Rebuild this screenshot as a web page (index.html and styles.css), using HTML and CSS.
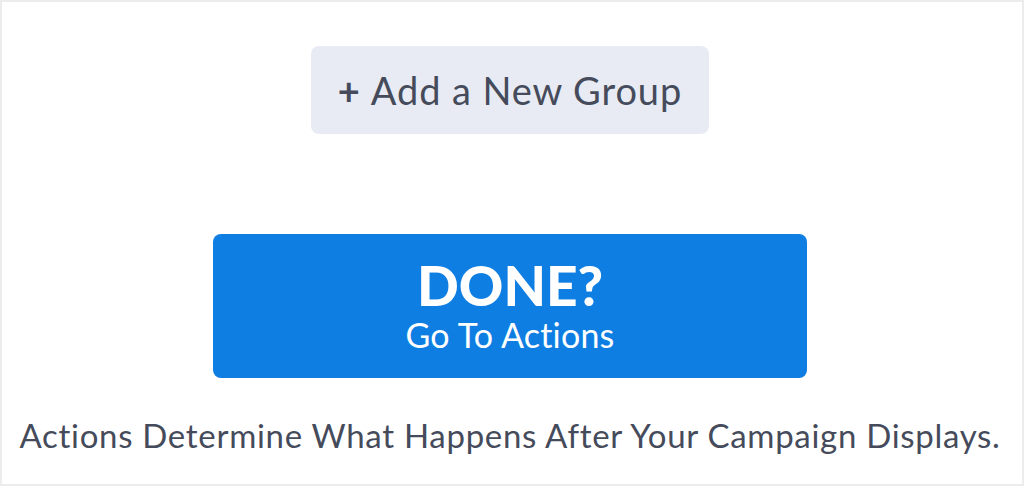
FILE: index.html
```html
<!DOCTYPE html>
<html lang="en">
<head>
<meta charset="utf-8">
<title>Groups</title>
<link rel="stylesheet" href="styles.css">
</head>
<body>
<div class="frame">
  <button class="add-group" type="button"><span class="plus">+</span> Add a New Group</button>
  <button class="done" type="button">
    <span class="done-title">DONE?</span>
    <span class="done-sub">Go To Actions</span>
  </button>
  <p class="note">Actions Determine What Happens After Your Campaign Displays.</p>
</div>
</body>
</html>
```
FILE: styles.css
```css
* { box-sizing: border-box; }
html, body { margin: 0; padding: 0; background: #ffffff; }
.frame {
  width: 1024px;
  height: 486px;
  border: 2px solid #ececec;
  display: flex;
  flex-direction: column;
  align-items: center;
  padding: 44px 4px 0 0;
  font-family: Lato, "Open Sans", sans-serif;
  color: #454b5b;
}
.add-group {
  width: 398px;
  height: 88px;
  border: none;
  border-radius: 8px;
  background: #e8ebf3;
  color: #454b5b;
  font-family: inherit;
  font-size: 38px;
  font-weight: 400;
  letter-spacing: 0.9px;
  padding: 0;
  display: flex;
  align-items: center;
  justify-content: center;
}
.plus { font-weight: 700; margin-right: 10px; }
.done {
  margin-top: 100px;
  width: 594px;
  height: 144px;
  border: none;
  border-radius: 8px;
  background: #0e7ee3;
  color: #ffffff;
  font-family: inherit;
  display: flex;
  flex-direction: column;
  align-items: center;
  justify-content: center;
  padding: 0;
}
.done-title {
  font-size: 55px;
  font-weight: 900;
  line-height: 56px;
}
.done-sub {
  font-size: 34px;
  font-weight: 400;
  line-height: 40px;
  margin-top: 2px;
  letter-spacing: 0.2px;
}
.note {
  margin: 38px 0 0;
  font-size: 33px;
  line-height: 38px;
  letter-spacing: 0.7px;
  color: #454b5b;
}
```
